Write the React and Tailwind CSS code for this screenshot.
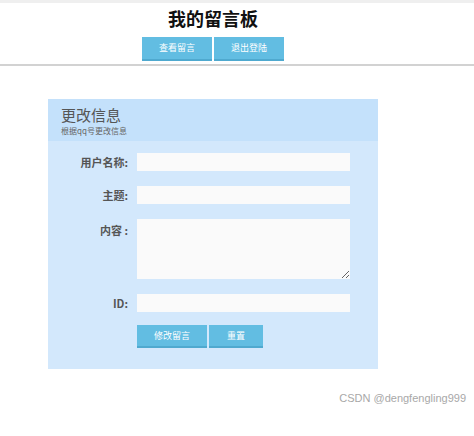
const fontCn = { fontFamily: '"Noto Sans CJK SC", "Noto Sans", sans-serif' };

const Fila = ({ label, children, top = false }) => (
  <div className={`flex ${top ? "items-start" : "items-center"}`}>
    <label
      className={`w-[80px] text-right text-[11px] font-bold text-[#555] ${top ? "pt-[3px]" : ""}`}
    >
      {label}
    </label>
    <div className="ml-[9px]">{children}</div>
  </div>
);

const App = () => {
  return (
    <div className="relative h-[436px] w-[474px] bg-white overflow-hidden" style={fontCn}>
      <div className="h-[3px] bg-[#efefef]" />
      <div className="w-[426px] flex flex-col items-center">
        <h1 className="mt-[3px] text-[18px] leading-[24px] font-bold text-[#111]">我的留言板</h1>
        <div className="mt-[7px] flex gap-[2px]">
          <button className="w-[70px] h-[24px] bg-[#62bde2] border-b-2 border-[#4fa9cf] text-white text-[9px]">
            查看留言
          </button>
          <button className="w-[70px] h-[24px] bg-[#62bde2] border-b-2 border-[#4fa9cf] text-white text-[9px]">
            退出登陆
          </button>
        </div>
      </div>
      <div className="mt-[3px] h-[2px] bg-[#d2d2d2]" />

      <div className="ml-[48px] mt-[33px] w-[330px] bg-[#d3e8fc]">
        <div className="h-[42px] bg-[#c4e1fb] px-[13px] pt-[8px]">
          <h2 className="text-[15px] leading-[16px] text-[#555]">更改信息</h2>
          <p className="mt-[3px] text-[8px] leading-[9px] text-[#666]">根据qq号更改信息</p>
        </div>
        <form className="pt-[12px] pb-[21px] flex flex-col gap-[15px]">
          <Fila label="用户名称:">
            <input className="block w-[213px] h-[18px] bg-[#fafafa] outline-none" />
          </Fila>
          <Fila label="主题:">
            <input className="block w-[213px] h-[18px] bg-[#fafafa] outline-none" />
          </Fila>
          <Fila label="内容 :" top>
            <textarea className="block w-[213px] h-[60px] bg-[#fafafa] outline-none" />
          </Fila>
          <Fila label="ID:">
            <input className="block w-[213px] h-[18px] bg-[#fafafa] outline-none" />
          </Fila>
          <div className="-mt-[2px] ml-[89px] flex gap-[2px]">
            <button
              type="button"
              className="w-[70px] h-[23px] bg-[#62bde2] border-b-2 border-[#4fa9cf] text-white text-[9px]"
            >
              修改留言
            </button>
            <button
              type="reset"
              className="w-[54px] h-[23px] bg-[#62bde2] border-b-2 border-[#4fa9cf] text-white text-[9px]"
            >
              重置
            </button>
          </div>
        </form>
      </div>

      <p
        className="absolute right-[8px] top-[390px] text-[11px] text-[#a8a8a8]"
        style={{ fontFamily: '"Liberation Sans", Arial, sans-serif' }}
      >
        CSDN @dengfengling999
      </p>
    </div>
  );
};

export default App;
